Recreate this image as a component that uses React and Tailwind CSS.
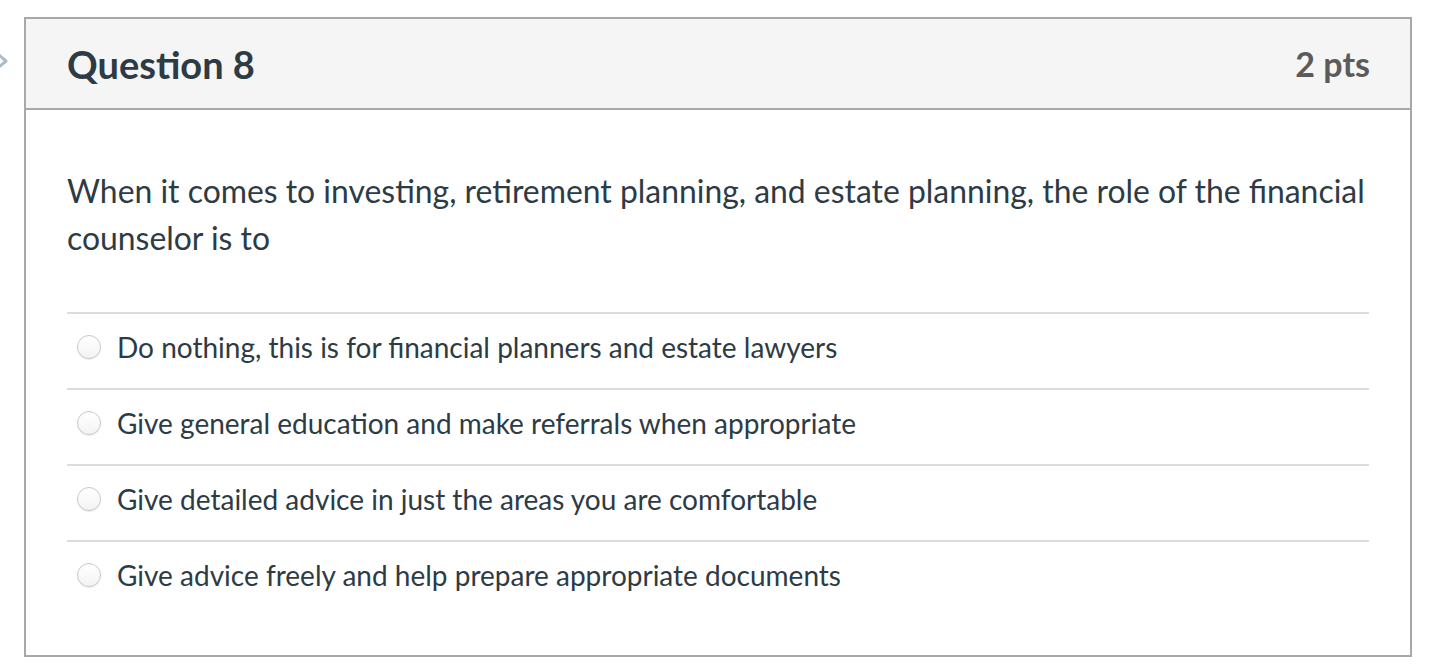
import React from "react";

const answers = [
  "Do nothing, this is for financial planners and estate lawyers",
  "Give general education and make referrals when appropriate",
  "Give detailed advice in just the areas you are comfortable",
  "Give advice freely and help prepare appropriate documents",
];

export default function App() {
  return (
    <div
      className="relative w-[1448px] h-[666px] bg-white overflow-hidden"
      style={{ fontFamily: "Lato, 'Noto Sans', sans-serif" }}
    >
      <svg
        className="absolute left-[-16px] top-[46px]"
        width="28"
        height="30"
        viewBox="0 0 28 30"
      >
        <path d="M8 3 L22 15 L8 27" fill="none" stroke="#a9bccb" strokeWidth="3" strokeLinejoin="round" />
      </svg>
      <div className="ml-[24px] mt-[17px] w-[1388px] h-[640px] border-2 border-[#a8a8a8] flex flex-col">
        <div className="h-[91px] shrink-0 bg-[#f5f5f5] border-b-2 border-[#a8a8a8] flex items-center justify-between pl-[41px] pr-[40px]">
          <h2 className="text-[38px] font-bold text-[#2d3b45] leading-none">Question 8</h2>
          <span className="text-[34px] font-bold text-[#5b5b5b] leading-none">2 pts</span>
        </div>
        <div className="px-[41px] pt-[58px]">
          <p className="text-[31.9px] leading-[47px] text-[#2d3b45] mr-[-12px]">
            When it comes to investing, retirement planning, and estate planning, the role of the financial counselor is to
          </p>
          <div className="mt-[50px]">
            {answers.map((a) => (
              <div
                key={a}
                className="h-[76px] pb-[8px] border-t-2 border-[#dcdcdc] flex items-center"
              >
                <span className="ml-[10px] w-[24px] h-[24px] rounded-full border border-[#c8c8c8] bg-gradient-to-b from-white to-[#f3f3f3] shadow-[0_1px_1px_rgba(0,0,0,0.08)] shrink-0" />
                <span className="ml-[16px] text-[28px] text-[#2d3b45] leading-none">{a}</span>
              </div>
            ))}
          </div>
        </div>
      </div>
    </div>
  );
}
